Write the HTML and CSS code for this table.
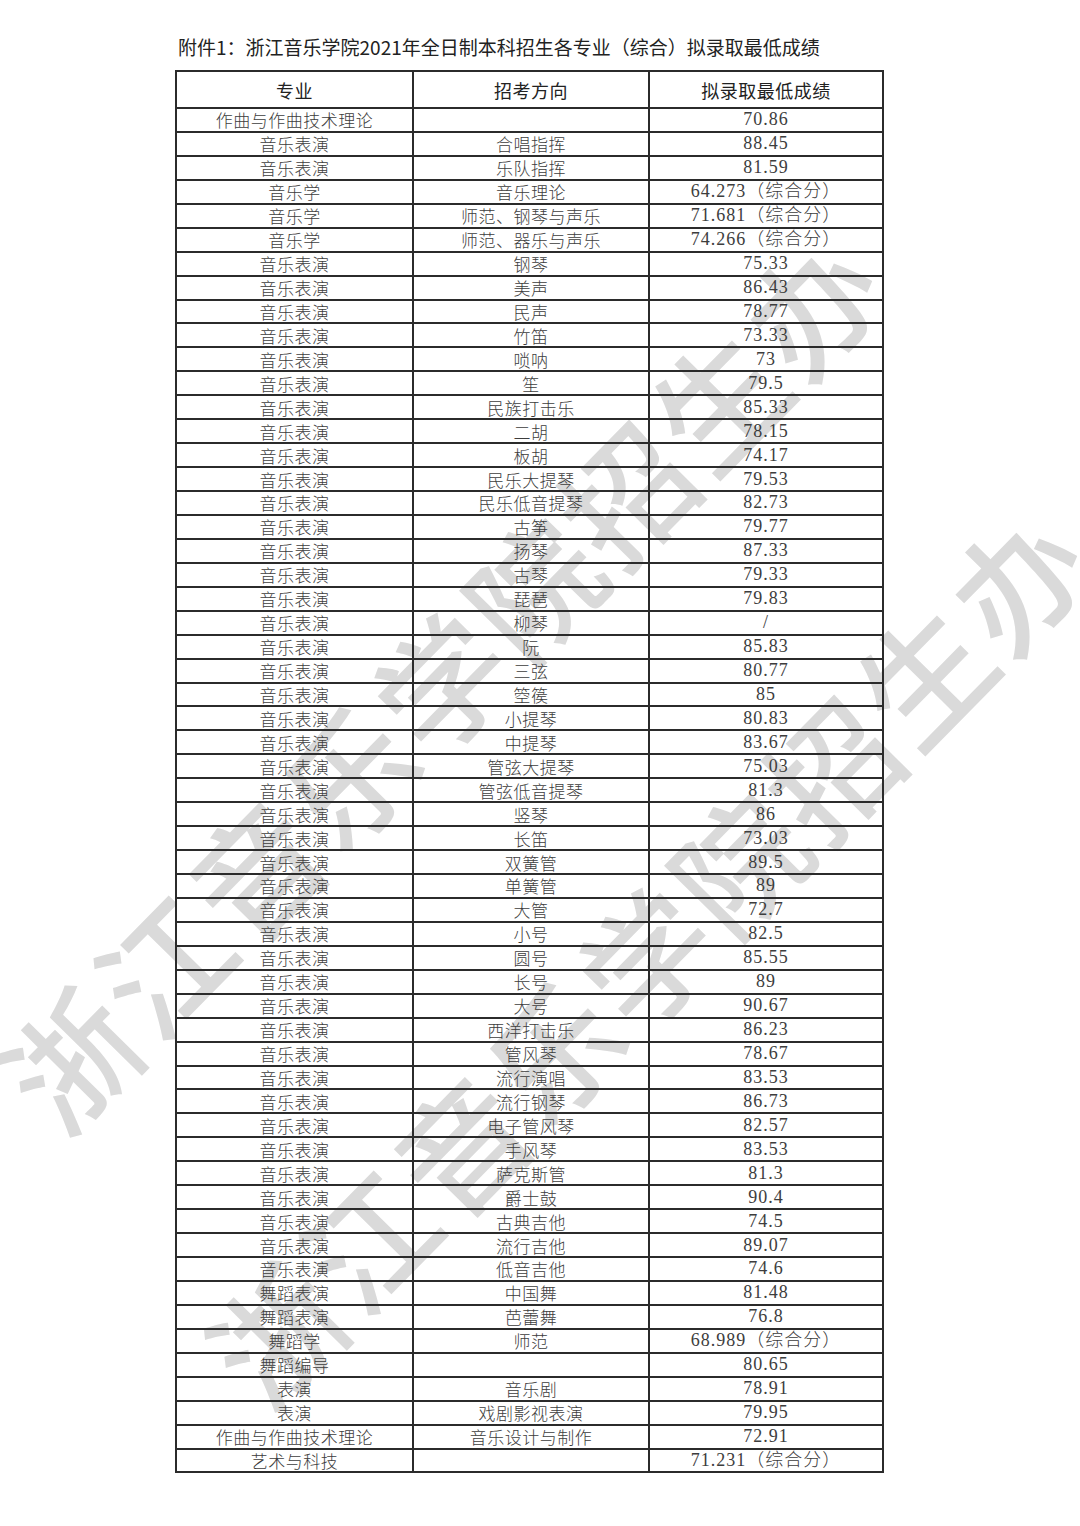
FILE: index.html
```html
<!DOCTYPE html>
<html lang="zh-CN">
<head>
<meta charset="utf-8">
<title>浙江音乐学院2021年全日制本科招生各专业（综合）拟录取最低成绩</title>
<link rel="stylesheet" href="styles.css">
</head>
<body>
<div class="watermark" aria-hidden="true">
  <div class="wm-line wm-a">浙江音乐学院招生办</div>
  <div class="wm-line wm-b">浙江音乐学院招生办</div>
</div>
<main class="page">
  <h1 class="title">附件1：浙江音乐学院2021年全日制本科招生各专业（综合）拟录取最低成绩</h1>
  <table class="scores">
    <colgroup>
      <col class="c1"><col class="c2"><col class="c3">
    </colgroup>
    <thead>
      <tr><th>专业</th><th>招考方向</th><th>拟录取最低成绩</th></tr>
    </thead>
    <tbody>
      <tr><td>作曲与作曲技术理论</td><td></td><td class="num">70.86</td></tr>
      <tr><td>音乐表演</td><td>合唱指挥</td><td class="num">88.45</td></tr>
      <tr><td>音乐表演</td><td>乐队指挥</td><td class="num">81.59</td></tr>
      <tr><td>音乐学</td><td>音乐理论</td><td class="num">64.273（综合分）</td></tr>
      <tr><td>音乐学</td><td>师范、钢琴与声乐</td><td class="num">71.681（综合分）</td></tr>
      <tr><td>音乐学</td><td>师范、器乐与声乐</td><td class="num">74.266（综合分）</td></tr>
      <tr><td>音乐表演</td><td>钢琴</td><td class="num">75.33</td></tr>
      <tr><td>音乐表演</td><td>美声</td><td class="num">86.43</td></tr>
      <tr><td>音乐表演</td><td>民声</td><td class="num">78.77</td></tr>
      <tr><td>音乐表演</td><td>竹笛</td><td class="num">73.33</td></tr>
      <tr><td>音乐表演</td><td>唢呐</td><td class="num">73</td></tr>
      <tr><td>音乐表演</td><td>笙</td><td class="num">79.5</td></tr>
      <tr><td>音乐表演</td><td>民族打击乐</td><td class="num">85.33</td></tr>
      <tr><td>音乐表演</td><td>二胡</td><td class="num">78.15</td></tr>
      <tr><td>音乐表演</td><td>板胡</td><td class="num">74.17</td></tr>
      <tr><td>音乐表演</td><td>民乐大提琴</td><td class="num">79.53</td></tr>
      <tr><td>音乐表演</td><td>民乐低音提琴</td><td class="num">82.73</td></tr>
      <tr><td>音乐表演</td><td>古筝</td><td class="num">79.77</td></tr>
      <tr><td>音乐表演</td><td>扬琴</td><td class="num">87.33</td></tr>
      <tr><td>音乐表演</td><td>古琴</td><td class="num">79.33</td></tr>
      <tr><td>音乐表演</td><td>琵琶</td><td class="num">79.83</td></tr>
      <tr><td>音乐表演</td><td>柳琴</td><td class="num">/</td></tr>
      <tr><td>音乐表演</td><td>阮</td><td class="num">85.83</td></tr>
      <tr><td>音乐表演</td><td>三弦</td><td class="num">80.77</td></tr>
      <tr><td>音乐表演</td><td>箜篌</td><td class="num">85</td></tr>
      <tr><td>音乐表演</td><td>小提琴</td><td class="num">80.83</td></tr>
      <tr><td>音乐表演</td><td>中提琴</td><td class="num">83.67</td></tr>
      <tr><td>音乐表演</td><td>管弦大提琴</td><td class="num">75.03</td></tr>
      <tr><td>音乐表演</td><td>管弦低音提琴</td><td class="num">81.3</td></tr>
      <tr><td>音乐表演</td><td>竖琴</td><td class="num">86</td></tr>
      <tr><td>音乐表演</td><td>长笛</td><td class="num">73.03</td></tr>
      <tr><td>音乐表演</td><td>双簧管</td><td class="num">89.5</td></tr>
      <tr><td>音乐表演</td><td>单簧管</td><td class="num">89</td></tr>
      <tr><td>音乐表演</td><td>大管</td><td class="num">72.7</td></tr>
      <tr><td>音乐表演</td><td>小号</td><td class="num">82.5</td></tr>
      <tr><td>音乐表演</td><td>圆号</td><td class="num">85.55</td></tr>
      <tr><td>音乐表演</td><td>长号</td><td class="num">89</td></tr>
      <tr><td>音乐表演</td><td>大号</td><td class="num">90.67</td></tr>
      <tr><td>音乐表演</td><td>西洋打击乐</td><td class="num">86.23</td></tr>
      <tr><td>音乐表演</td><td>管风琴</td><td class="num">78.67</td></tr>
      <tr><td>音乐表演</td><td>流行演唱</td><td class="num">83.53</td></tr>
      <tr><td>音乐表演</td><td>流行钢琴</td><td class="num">86.73</td></tr>
      <tr><td>音乐表演</td><td>电子管风琴</td><td class="num">82.57</td></tr>
      <tr><td>音乐表演</td><td>手风琴</td><td class="num">83.53</td></tr>
      <tr><td>音乐表演</td><td>萨克斯管</td><td class="num">81.3</td></tr>
      <tr><td>音乐表演</td><td>爵士鼓</td><td class="num">90.4</td></tr>
      <tr><td>音乐表演</td><td>古典吉他</td><td class="num">74.5</td></tr>
      <tr><td>音乐表演</td><td>流行吉他</td><td class="num">89.07</td></tr>
      <tr><td>音乐表演</td><td>低音吉他</td><td class="num">74.6</td></tr>
      <tr><td>舞蹈表演</td><td>中国舞</td><td class="num">81.48</td></tr>
      <tr><td>舞蹈表演</td><td>芭蕾舞</td><td class="num">76.8</td></tr>
      <tr><td>舞蹈学</td><td>师范</td><td class="num">68.989（综合分）</td></tr>
      <tr><td>舞蹈编导</td><td></td><td class="num">80.65</td></tr>
      <tr><td>表演</td><td>音乐剧</td><td class="num">78.91</td></tr>
      <tr><td>表演</td><td>戏剧影视表演</td><td class="num">79.95</td></tr>
      <tr><td>作曲与作曲技术理论</td><td>音乐设计与制作</td><td class="num">72.91</td></tr>
      <tr><td>艺术与科技</td><td></td><td class="num">71.231（综合分）</td></tr>
    </tbody>
  </table>
</main>
</body>
</html>
```

FILE: styles.css
```css
html, body {
  margin: 0;
  padding: 0;
  background: #ffffff;
  overflow: hidden;
}

body {
  position: relative;
  width: 1080px;
  height: 1526px;
  font-family: "Noto Sans CJK SC", "Noto Sans", sans-serif;
  color: #333;
}

.watermark {
  position: absolute;
  inset: 0;
  z-index: 0;
  overflow: hidden;
  pointer-events: none;
}

.wm-line {
  position: absolute;
  white-space: nowrap;
  font-family: "Noto Sans CJK SC", sans-serif;
  font-size: 128px;
  font-weight: 500;
  line-height: 128px;
  height: 128px;
  letter-spacing: 4px;
  color: #dadada;
  transform-origin: 0 50%;
  transform: rotate(-45.5deg);
}

.wm-a {
  left: 24px;
  top: 1038px;
}

.wm-b {
  left: 229px;
  top: 1313px;
}

.page {
  position: relative;
  z-index: 1;
  margin-left: 175px;
  width: 707px;
  padding-top: 35px;
}

.title {
  margin: 0 0 11px 3px;
  font-size: 19px;
  line-height: 24px;
  font-weight: 400;
  color: #222;
  white-space: nowrap;
}

.scores {
  width: 707px;
  border-collapse: collapse;
  table-layout: fixed;
  border: 2px solid #2b2b2b;
}

.c1 { width: 237px; }
.c2 { width: 236px; }
.c3 { width: 234px; }

.scores th,
.scores td {
  border: 2px solid #2b2b2b;
  padding: 0;
  text-align: center;
  vertical-align: middle;
  white-space: nowrap;
}

.scores th {
  height: 35px;
  font-size: 18px;
  font-weight: 400;
  color: #222;
  letter-spacing: 0.5px;
}

.scores td {
  height: 21.95px;
  font-size: 17px;
  line-height: 21px;
  font-weight: 300;
  color: #3d3d3d;
  letter-spacing: 0.5px;
}

.scores td.num {
  font-family: "Liberation Serif", "Noto Sans CJK SC", serif;
  font-size: 18px;
  letter-spacing: 1px;
}
```
